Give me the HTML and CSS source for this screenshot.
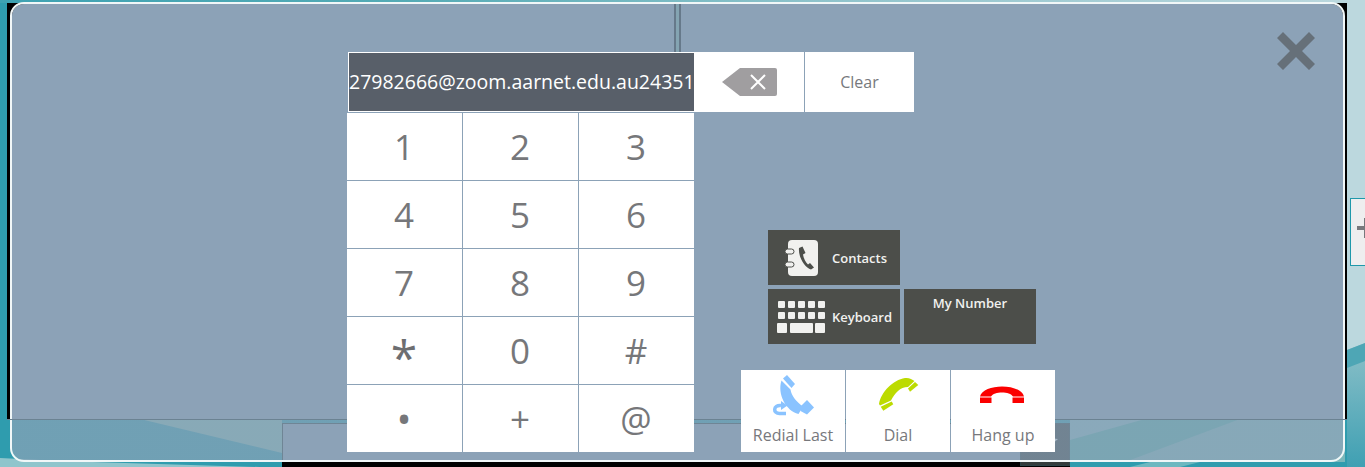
FILE: index.html
```html
<!DOCTYPE html>
<html lang="en">
<head>
<meta charset="utf-8">
<title>Dial pad</title>
<link rel="stylesheet" href="styles.css">
</head>
<body>
<svg class="scene" viewBox="0 0 1365 467" preserveAspectRatio="none" aria-hidden="true">
  <defs>
    <linearGradient id="topStrip" x1="0" x2="1" y1="0" y2="0">
      <stop offset="0" stop-color="#3ea2b2"/>
      <stop offset="0.3" stop-color="#55abb5"/>
      <stop offset="0.6" stop-color="#8fc3cb"/>
      <stop offset="1" stop-color="#bcd8de"/>
    </linearGradient>
    <linearGradient id="lowerRight" x1="0" x2="0" y1="0" y2="1">
      <stop offset="0" stop-color="#8cc0c8"/>
      <stop offset="1" stop-color="#3fa0b3"/>
    </linearGradient>
  </defs>
  <rect width="1365" height="467" fill="#2f9cae"/>
  <rect x="0" y="420" width="1345" height="42" fill="#2f9cae"/>
  <rect width="1365" height="3" fill="url(#topStrip)"/>
  <rect x="1347" y="0" width="18" height="350" fill="#bcd8de"/>
  <path d="M1347 350 L1365 343 L1365 467 L1347 467 Z" fill="url(#lowerRight)"/>
  <path d="M1347 350 L1365 343 L1365 361 L1347 368 Z" fill="#4ea6b5"/>
  <path d="M140 419 L282 419 L282 453 Z" fill="#7fbbb7"/>
  <path d="M0 458 L60 461 L260 467 L0 467 Z" fill="#8fc5cc"/>
  <path d="M1070 419 L1345 419 L1345 462 L1070 462 Z" fill="#53adaa"/>
  <path d="M1070 419 L1145 419 L1070 440 Z" fill="#85bac4"/>
  <path d="M1240 419 L1345 419 L1345 462 L1125 462 Z" fill="#7bb7bb"/>
  <path d="M1130 467 L1150 462 L1200 462 L1180 467 Z" fill="#6db8c0"/>
</svg>
<div class="app-window"></div>
<div class="page-footer">
  <div class="footer-panel"></div>
  <div class="footer-star">
    <svg viewBox="0 0 50 43" width="50" height="43"><path d="M25 6 L29 15 L38 16 L31 22 L33 29 L25 25 L17 29 L19 22 L12 16 L21 15 Z" fill="#e4e8ea"/></svg>
  </div>
</div>
<button class="side-tab" type="button" aria-label="Add"><span class="side-tab-mark"></span></button>

<main class="dialog">
  <div class="rule-h"></div>
  <div class="rule-gap"></div>
  <div class="rule-v rule-v-a"></div>
  <div class="rule-v rule-v-b"></div>
  <button class="close" type="button" aria-label="Close">
    <svg viewBox="0 0 38 38" width="38" height="38"><path d="M6 0 L19 13 L32 0 L38 6 L25 19 L38 32 L32 38 L19 25 L6 38 L0 32 L13 19 L0 6 Z" fill="#667079"/></svg>
  </button>
  <section class="dialer">
    <div class="display">27982666@zoom.aarnet.edu.au24351</div>
    <div class="keypad">
      <button class="key" type="button">1</button>
      <button class="key" type="button">2</button>
      <button class="key" type="button">3</button>
      <button class="key" type="button">4</button>
      <button class="key" type="button">5</button>
      <button class="key" type="button">6</button>
      <button class="key" type="button">7</button>
      <button class="key" type="button">8</button>
      <button class="key" type="button">9</button>
      <button class="key key-star" type="button">*</button>
      <button class="key" type="button">0</button>
      <button class="key" type="button">#</button>
      <button class="key key-dot" type="button">•</button>
      <button class="key" type="button">+</button>
      <button class="key" type="button">@</button>
    </div>
  </section>
  <section class="controls">
    <div class="edit-row">
      <button class="edit-btn edit-back" type="button" aria-label="Backspace">
        <svg viewBox="0 0 55 28" width="55" height="28"><path d="M0 14 L18 0 L53 0 Q55 0 55 2 L55 26 Q55 28 53 28 L18 28 Z" fill="#a09ea0"/><path d="M29 7 L43 21 M43 7 L29 21" stroke="#fff" stroke-width="2" fill="none"/></svg>
      </button>
      <button class="edit-btn edit-clear" type="button">Clear</button>
    </div>
    <div class="tools">
      <div class="tool-row">
        <button class="tool" type="button">
          <span class="tool-icon">
            <svg viewBox="0 0 34 38" width="34" height="38"><rect x="3" y="1" width="30" height="36" rx="4" fill="#f1f1ef"/><rect x="0" y="10" width="9" height="5" rx="2.5" fill="#f1f1ef" stroke="#4c4e4a"/><rect x="0" y="23" width="9" height="5" rx="2.5" fill="#f1f1ef" stroke="#4c4e4a"/><path d="M14 9 L17.5 7.5 L20.5 14 L18 15.5 C18.5 19 20.5 23 23 25.5 L25 24 L29 28.5 L26 30.5 C20 29 13 18 14 9 Z" fill="#4c4e4a"/></svg>
          </span>
          <span>Contacts</span>
        </button>
      </div>
      <div class="tool-row">
        <button class="tool" type="button">
          <span class="tool-icon">
            <svg viewBox="0 0 49 32" width="49" height="32" fill="#f1f1ef"><rect x="1" y="0" width="7" height="7" rx="1"/><rect x="11" y="0" width="7" height="7" rx="1"/><rect x="21" y="0" width="7" height="7" rx="1"/><rect x="31" y="0" width="7" height="7" rx="1"/><rect x="41" y="0" width="7" height="7" rx="1"/><rect x="1" y="11" width="7" height="7" rx="1"/><rect x="11" y="11" width="7" height="7" rx="1"/><rect x="21" y="11" width="7" height="7" rx="1"/><rect x="31" y="11" width="7" height="7" rx="1"/><rect x="41" y="11" width="7" height="7" rx="1"/><rect x="0" y="22" width="10" height="10" rx="1"/><rect x="13" y="22" width="23" height="10" rx="1"/><rect x="38" y="22" width="10" height="10" rx="1"/></svg>
          </span>
          <span>Keyboard</span>
        </button>
        <button class="tool tool-number" type="button">My Number</button>
      </div>
    </div>
    <div class="call-row">
      <button class="call" type="button">
        <svg viewBox="0 0 42 42" width="42" height="42" fill="#8ac3ff"><path d="M9.5 6.5 L18.5 15.5 C19.5 22 24.5 28 31 32.5 L26.5 40 C14 37 5 20 9.5 6.5 Z"/><path d="M11 4.5 L15 1 L23 10 L19.5 14 Z"/><path d="M28 33 L35 26 L42 33.5 L35 40.5 L28.5 37 Z"/><path d="M9 31.5 C1 30.5 0.5 40 8 39.5 L14 39.5" stroke="#8ac3ff" stroke-width="3.5" fill="none"/><path d="M9 27 L15.5 31.5 L9 36 Z"/></svg>
        <span>Redial Last</span>
      </button>
      <button class="call" type="button">
        <svg viewBox="0 0 42 42" width="42" height="42" fill="#bcdb00"><path d="M2 30 C4 18 16 6 28 4 C32 3.5 35 5 37.5 7 L31 13 C23 13 18 19 14 26.5 L3 31.5 Z"/><path d="M3.7 32.7 L14.7 27.5 L16.3 30.3 L6.3 36.7 Z"/><path d="M31 14.5 L38 8 L41.3 11 L33 17.7 Z"/></svg>
        <span>Dial</span>
      </button>
      <button class="call call-hang" type="button">
        <svg viewBox="0 0 44 42" width="44" height="42" fill="#fb0000"><path d="M0 22.5 C3 9 41 9 44 22.5 L33 22.5 C30 17 14 17 11 22.5 Z"/><rect x="0" y="23.5" width="11.5" height="5.5"/><rect x="32.5" y="23.5" width="11.5" height="5.5"/></svg>
        <span>Hang up</span>
      </button>
    </div>
  </section>
</main>
</body>
</html>
```

FILE: styles.css
```css
html, body {
  margin: 0;
  padding: 0;
  width: 1365px;
  height: 467px;
  overflow: hidden;
  background: #2f9cae;
  font-family: "Open Sans", "Liberation Sans", sans-serif;
}
button {
  font-family: inherit;
  border: 0;
  padding: 0;
  margin: 0;
  cursor: pointer;
}
.scene {
  position: absolute;
  left: 0;
  top: 0;
  width: 1365px;
  height: 467px;
}
.app-window {
  position: absolute;
  left: 7px;
  top: 3px;
  width: 1340px;
  height: 416px;
  background: #000;
}
.page-footer {
  position: absolute;
  left: 282px;
  top: 423px;
  width: 788px;
  height: 44px;
  background: #000;
}
.footer-panel {
  height: 38px;
  box-sizing: border-box;
  background: #8ca2b7;
  border-top: 1px solid #2b4246;
  border-left: 1px solid #2b4246;
}
.footer-star {
  position: absolute;
  right: 0;
  top: 0;
  width: 50px;
  height: 43px;
  box-sizing: border-box;
  background: #323c3c;
  outline: 1px solid #2b4246;
  outline-offset: -1px;
}
.footer-star svg { display: block; }
.side-tab {
  position: absolute;
  left: 1350px;
  top: 198px;
  width: 30px;
  height: 68px;
  background: #eeeeef;
  border: 1px solid #1f98aa;
  box-sizing: border-box;
}
.side-tab-mark {
  position: absolute;
  left: 6px;
  top: 27px;
  width: 20px;
  height: 4px;
  background: #77787c;
}
.side-tab-mark::after {
  content: "";
  position: absolute;
  left: 7px;
  top: -8px;
  width: 4px;
  height: 20px;
  background: #77787c;
}
.dialog {
  position: absolute;
  left: 10px;
  top: 2px;
  width: 1335px;
  height: 460px;
  box-sizing: border-box;
  border: 2px solid #f1f7f8;
  border-radius: 14px;
  padding: 48px 0 0 335px;
  background: linear-gradient(#8ca2b7 0, #8ca2b7 415px, rgba(140, 162, 183, 0.7) 415px);
  background-clip: padding-box;
  display: flex;
  align-items: flex-start;
}
.rule-h {
  position: absolute;
  left: -5px;
  top: 415px;
  width: 1340px;
  height: 1px;
  background: #6b8292;
}
.rule-v {
  position: absolute;
  top: 0;
  width: 2px;
  height: 48px;
  background: #66798a;
}
.rule-v-a { left: 662px; }
.rule-v-b { left: 667px; }
.rule-gap {
  position: absolute;
  left: 664px;
  top: 0;
  width: 3px;
  height: 48px;
  background: #84a4b2;
}
.close {
  position: absolute;
  left: 1265px;
  top: 28px;
  width: 38px;
  height: 38px;
  background: none;
}
.close svg { display: block; }
.dialer {
  position: relative;
  width: 347px;
  flex: none;
}
.display {
  width: 346px;
  height: 60px;
  margin-left: 1px;
  box-sizing: border-box;
  border: 1px solid #fff;
  border-right: 0;
  background: #585f69;
  color: #fff;
  font-size: 19.5px;
  line-height: 58px;
  white-space: nowrap;
  overflow: hidden;
}
.keypad {
  margin-top: 1px;
  display: grid;
  grid-template-columns: 115px 115px 115px;
  grid-auto-rows: 67px;
  gap: 1px;
  background: #8ca2b7;
}
.key {
  background: #fff;
  color: #76777a;
  font-size: 35px;
  font-weight: 400;
  line-height: 67px;
  text-align: center;
  padding: 0 1px 0 0;
  box-sizing: border-box;
}
.key-star { font-size: 48px; line-height: 80px; color: #6d6e71; }
.key-dot { font-size: 40px; }
.controls {
  position: relative;
  width: 361px;
  flex: none;
  display: flex;
  flex-direction: column;
  height: 400px;
}
.edit-row {
  display: flex;
  gap: 1px;
  height: 60px;
}
.edit-btn {
  background: #fff;
  height: 60px;
}
.edit-back {
  width: 110px;
  display: flex;
  align-items: center;
  justify-content: center;
  box-sizing: border-box;
}
.edit-clear {
  width: 109px;
  color: #77787c;
  font-size: 16px;
}
.tools {
  margin: 118px 0 0 74px;
  display: flex;
  flex-direction: column;
  gap: 4px;
}
.tool-row {
  display: flex;
  gap: 4px;
}
.tool {
  width: 132px;
  height: 55px;
  background: #4c4e4a;
  color: #f1f1ef;
  font-size: 13px;
  font-weight: 600;
  display: flex;
  align-items: center;
  text-align: left;
}
.tool-icon {
  width: 64px;
  flex: none;
  display: flex;
  justify-content: center;
}
.tool-icon svg { display: block; margin-left: 3px; }
.tool-number {
  display: block;
  text-align: center;
  line-height: 28px;
  height: 55px;
  padding-bottom: 27px;
  box-sizing: border-box;
}
.call-row {
  margin: 26px 0 0 47px;
  display: flex;
  gap: 1px;
  width: 314px;
}
.call {
  flex: 1 1 0;
  height: 82px;
  background: #fff;
  color: #77787c;
  font-size: 16px;
  display: flex;
  flex-direction: column;
  align-items: center;
  padding-top: 4px;
  box-sizing: border-box;
}
.call svg { display: block; flex: none; }
.call-hang svg { margin-left: -2px; }
.call span { margin-top: 8px; }
```
